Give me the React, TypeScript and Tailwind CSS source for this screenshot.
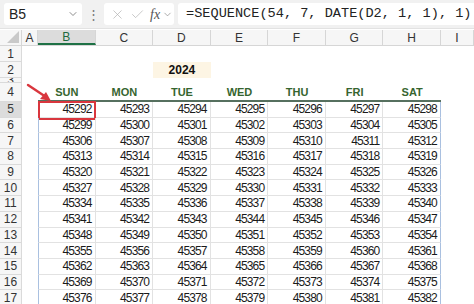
import React from 'react';
import { X, Check, ChevronDown } from 'lucide-react';

const COLS = ['A', 'B', 'C', 'D', 'E', 'F', 'G', 'H', 'I'];
const DAYS = ['SUN', 'MON', 'TUE', 'WED', 'THU', 'FRI', 'SAT'];
const DATA_ROWS = [5, 6, 7, 8, 9, 10, 11, 12, 13, 14, 15, 16, 17];

const grid = 'grid grid-cols-[22px_16px_repeat(7,57.57px)_1fr] leading-none';

const RowHead: React.FC<{ n: number; active?: boolean }> = ({ n, active }) => (
  <div
    className={`flex items-center justify-center overflow-hidden border-r border-b border-[#dadada] text-[12px] ${
      active ? 'bg-[#dcdcdc] text-[#3a3a3a]' : 'bg-[#f6f6f6] text-[#333]'
    }`}
  >
    {n}
  </div>
);

const App: React.FC = () => {
  return (
    <div className="relative w-[474px] h-[304px] overflow-hidden bg-white font-['Liberation_Sans',Arial,sans-serif]">
      {/* formula bar */}
      <div className="flex h-[29px] items-center gap-[4px] bg-[#f1f1f1] pl-[4px] border-b border-[#e2e2e2]">
        <div className="flex h-[22px] w-[78px] items-center justify-between rounded-[3px] bg-white pl-[5px] pr-[3px] text-[14px] text-[#222]">
          <span>B5</span>
          <ChevronDown size={12} strokeWidth={1.5} className="text-[#666]" />
        </div>
        <div className="flex w-[14px] justify-center text-[13px] leading-none text-[#777]">⋮</div>
        <div className="flex h-[22px] w-[70px] items-center gap-[5px] rounded-[3px] bg-white pl-[6px] text-[#b0b0b0]">
          <X size={15} strokeWidth={1.1} />
          <Check size={15} strokeWidth={1.1} />
          <span className="font-['Liberation_Serif',serif] text-[14px] italic text-[#555]">fx</span>
          <ChevronDown size={11} strokeWidth={1.5} className="-ml-[3px] text-[#888]" />
        </div>
        <div className="flex h-[22px] flex-1 items-center rounded-l-[3px] bg-white pl-[8px] font-['Liberation_Mono',monospace] text-[13.6px] text-[#222] whitespace-nowrap">
          =SEQUENCE(54, 7, DATE(D2, 1, 1), 1)
        </div>
      </div>

      {/* column headers */}
      <div className={`${grid} mt-[1px] h-[16px] bg-[#f6f6f6] border-b border-[#d6d6d6]`}>
        <div className="relative border-r border-[#d6d6d6]">
          <svg className="absolute right-[2px] bottom-[2px]" width="12" height="12" viewBox="0 0 12 12">
            <polygon points="12,0 12,12 0,12" fill="#c9c9c9" />
          </svg>
        </div>
        {COLS.map((c) => (
          <div
            key={c}
            className={`flex items-center justify-center border-r border-[#d6d6d6] text-[12px] ${
              c === 'B' ? 'bg-[#dcdcdc] text-[#1e6b3f] border-b-2 border-b-[#1e7145]' : 'text-[#333]'
            }`}
          >
            {c}
          </div>
        ))}
      </div>

      {/* row 1 */}
      <div className={`${grid} h-[16px]`}>
        <RowHead n={1} />
        <div className="col-span-9" />
      </div>

      {/* row 2 */}
      <div className={`${grid} h-[16px]`}>
        <RowHead n={2} />
        <div />
        <div />
        <div />
        <div className="flex items-center justify-center bg-[#fdf5e4] text-[12px] font-bold text-[#111]">2024</div>
        <div className="col-span-5" />
      </div>

      {/* row 3 */}
      <div className={`${grid} h-[5px]`}>
        <RowHead n={3} />
        <div className="col-span-9" />
      </div>

      {/* row 4 */}
      <div className={`${grid} h-[19px]`}>
        <RowHead n={4} />
        <div />
        {DAYS.map((d) => (
          <div
            key={d}
            className="flex items-end justify-center pb-[2px] border-b-2 border-[#56705f] text-[11px] font-bold text-[#36652f]"
          >
            {d}
          </div>
        ))}
        <div />
      </div>

      {/* data rows */}
      {DATA_ROWS.map((r) => (
        <div key={r} className={`${grid} h-[15.7px]`}>
          <RowHead n={r} active={r === 5} />
          <div />
          {DAYS.map((_, c) => (
            <div
              key={c}
              className={`relative flex items-center justify-end pr-[3px] border-b border-r text-[12px] tracking-[-0.85px] text-[#1a1a1a] ${
                c === 0 ? 'border-l border-l-[#a9c0e0]' : ''
              } ${c === 6 ? 'border-r-[#a9c0e0]' : 'border-r-[#e2e2e2]'} border-b-[#e2e2e2]`}
            >
              {45292 + (r - 5) * 7 + c}
              {r === 5 && c === 0 && (
                <div className="absolute -left-[1px] -top-[1px] -right-[1px] -bottom-[3px] border-2 border-[#d9363e]" />
              )}
            </div>
          ))}
          <div />
        </div>
      ))}

      {/* arrow */}
      <svg className="absolute left-[26px] top-[83px]" width="30" height="22" viewBox="0 0 30 22">
        <line x1="2" y1="2" x2="20" y2="14" stroke="#d9363e" strokeWidth="2.4" strokeLinecap="round" />
        <polygon points="25,18 14,16 20,9" fill="#d9363e" />
      </svg>
    </div>
  );
};

export default App;
